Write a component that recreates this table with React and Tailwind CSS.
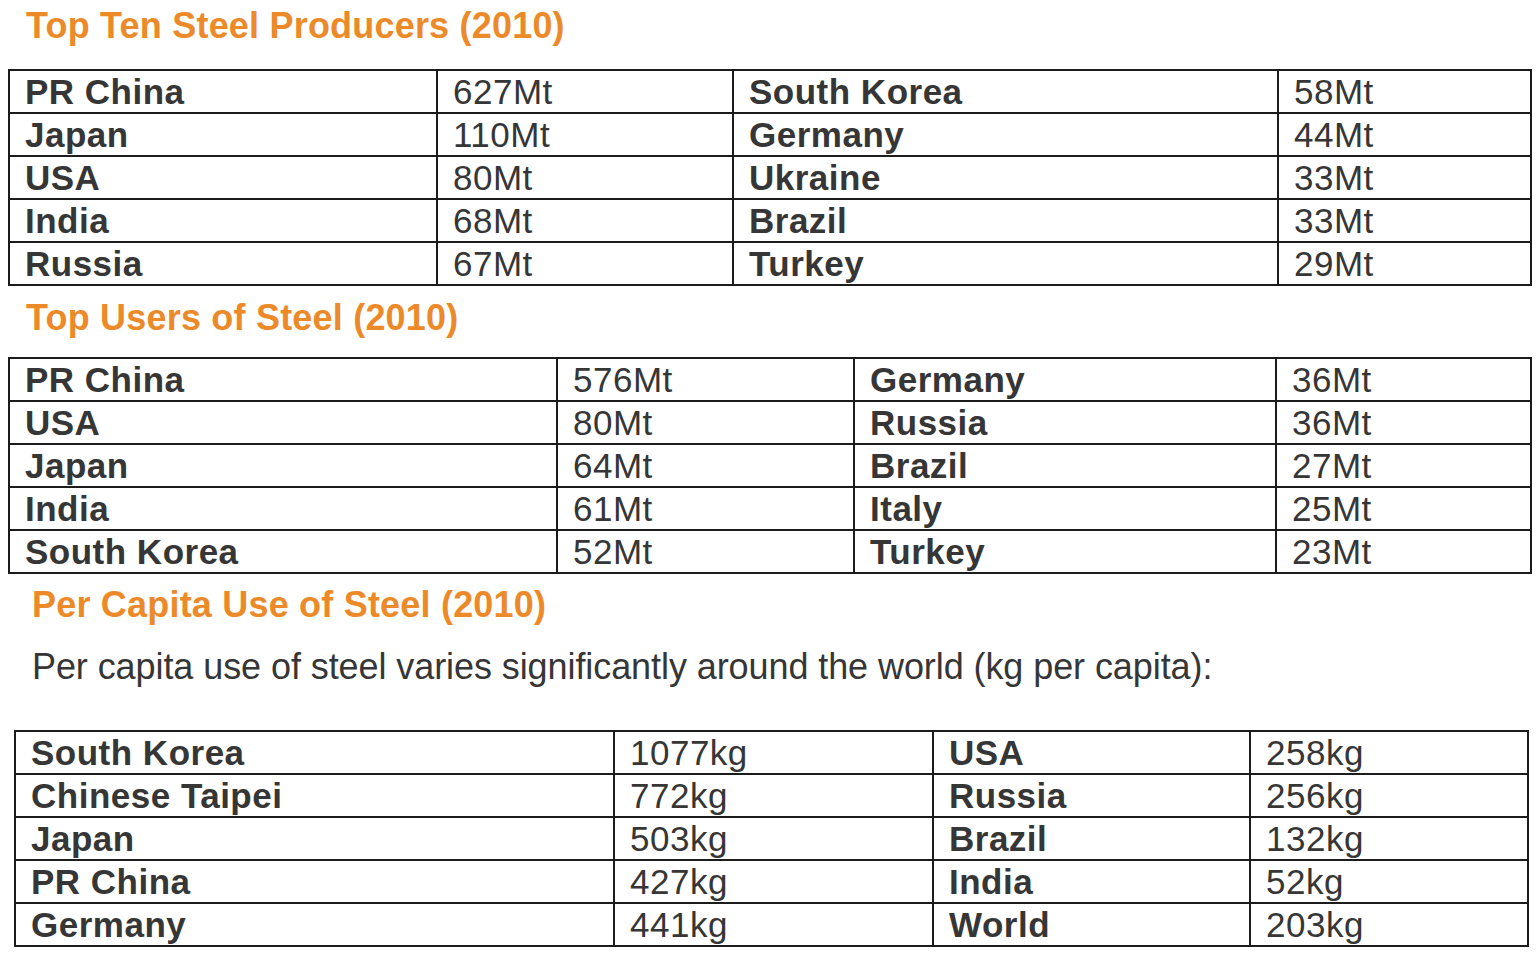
import React from 'react';

const producers = [
  ['PR China', '627Mt', 'South Korea', '58Mt'],
  ['Japan', '110Mt', 'Germany', '44Mt'],
  ['USA', '80Mt', 'Ukraine', '33Mt'],
  ['India', '68Mt', 'Brazil', '33Mt'],
  ['Russia', '67Mt', 'Turkey', '29Mt'],
];

const users = [
  ['PR China', '576Mt', 'Germany', '36Mt'],
  ['USA', '80Mt', 'Russia', '36Mt'],
  ['Japan', '64Mt', 'Brazil', '27Mt'],
  ['India', '61Mt', 'Italy', '25Mt'],
  ['South Korea', '52Mt', 'Turkey', '23Mt'],
];

const perCapita = [
  ['South Korea', '1077kg', 'USA', '258kg'],
  ['Chinese Taipei', '772kg', 'Russia', '256kg'],
  ['Japan', '503kg', 'Brazil', '132kg'],
  ['PR China', '427kg', 'India', '52kg'],
  ['Germany', '441kg', 'World', '203kg'],
];

function SteelTable({ rows, widths, className }) {
  return (
    <table className={`border-collapse table-fixed ${className}`}>
      <colgroup>
        {widths.map((w, i) => (
          <col key={i} style={{ width: w }} />
        ))}
      </colgroup>
      <tbody>
        {rows.map((r, i) => (
          <tr key={i} className="h-[43px]">
            {r.map((cell, j) => (
              <td
                key={j}
                className={`border-2 border-[#1c1c1c] pl-[15px] py-0 align-middle leading-none text-[35px] tracking-[0.5px] text-[#363636] whitespace-nowrap ${
                  j % 2 === 0 ? 'font-bold' : 'font-normal'
                }`}
              >
                {cell}
              </td>
            ))}
          </tr>
        ))}
      </tbody>
    </table>
  );
}

function Heading({ children, className }) {
  return (
    <div className={`h-[40px] text-[36px] leading-[40px] tracking-[0.2px] font-bold text-[#ec8a2a] ${className}`}>
      {children}
    </div>
  );
}

export default function App() {
  return (
    <div className="w-[1540px] h-[961px] bg-white overflow-hidden pt-[6px] font-['Liberation_Sans',Arial,sans-serif]">
      <Heading className="pl-[26px]">Top Ten Steel Producers (2010)</Heading>
      <SteelTable rows={producers} widths={[428, 296, 545, 253]} className="ml-[8px] mt-[23px] w-[1522px]" />

      <Heading className="pl-[26px] mt-[12px]">Top Users of Steel (2010)</Heading>
      <SteelTable rows={users} widths={[548, 297, 422, 255]} className="ml-[8px] mt-[19px] w-[1522px]" />

      <Heading className="pl-[32px] mt-[11px]">Per Capita Use of Steel (2010)</Heading>
      <p className="pl-[32px] mt-[22px] text-[36px] leading-[40px] tracking-[-0.08px] text-[#363636]">
        Per capita use of steel varies significantly around the world (kg per capita):
      </p>
      <SteelTable rows={perCapita} widths={[599, 319, 317, 278]} className="ml-[14px] mt-[43px] w-[1513px]" />
    </div>
  );
}
